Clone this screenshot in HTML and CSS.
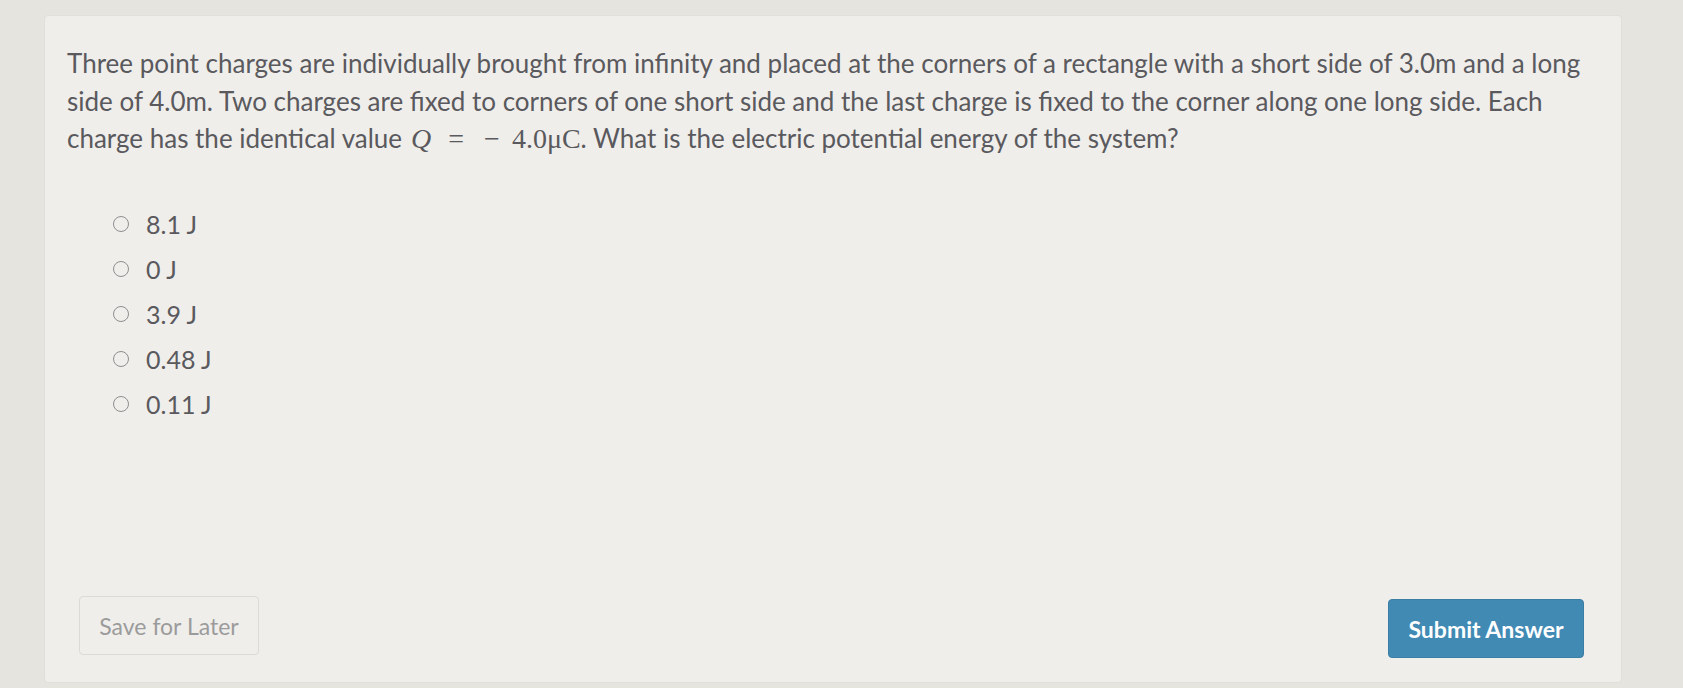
FILE: index.html
```html
<!DOCTYPE html>
<html lang="en">
<head>
<meta charset="utf-8">
<title>Question</title>
<link rel="stylesheet" href="styles.css">
</head>
<body>
<main class="card">
  <p class="question">Three point charges are individually brought from infinity and placed at the corners of a rectangle with a short side of 3.0m and a long side of 4.0m. Two charges are fixed to corners of one short side and the last charge is fixed to the corner along one long side. Each charge has the identical value<i class="m var">Q</i><span class="m op op-eq">=</span><span class="m op op-minus">−</span><span class="m num">4.0μC</span>. What is the electric potential energy of the system?</p>
  <ul class="options">
    <li class="option"><span class="radio"></span><span class="label">8.1 J</span></li>
    <li class="option"><span class="radio"></span><span class="label">0 J</span></li>
    <li class="option"><span class="radio"></span><span class="label">3.9 J</span></li>
    <li class="option"><span class="radio"></span><span class="label">0.48 J</span></li>
    <li class="option"><span class="radio"></span><span class="label">0.11 J</span></li>
  </ul>
  <div class="actions">
    <button class="btn btn-save">Save for Later</button>
    <button class="btn btn-submit">Submit Answer</button>
  </div>
</main>
</body>
</html>
```
FILE: styles.css
```css
html, body {
  margin: 0;
  padding: 0;
}
body {
  background: #e6e4df;
  width: 1683px;
  height: 688px;
  overflow: hidden;
  font-family: Lato, "Open Sans", sans-serif;
}
.card {
  margin: 15px 0 0 44px;
  width: 1578px;
  height: 668px;
  box-sizing: border-box;
  background: #efeeeb;
  border: 1px solid #e1dfda;
  border-radius: 4px;
  padding: 29px 20px 24px 22px;
  display: flex;
  flex-direction: column;
}
.question {
  margin: 0;
  font-size: 26px;
  line-height: 37.5px;
  color: #5a595d;
  width: 1545px;
}
.m {
  font-family: "Liberation Serif", "DejaVu Serif", serif;
  font-size: 28px;
  line-height: 1;
  display: inline-block;
}
.var {
  font-style: italic;
  margin-left: 9px;
  margin-right: 17px;
}
.op-eq {
  margin-right: 20px;
}
.op-minus {
  margin-right: 12px;
}
.options {
  list-style: none;
  margin: 44px 0 0 0;
  padding: 0 0 0 46px;
}
.option {
  display: flex;
  align-items: center;
  height: 45px;
}
.radio {
  width: 14px;
  height: 14px;
  border: 1.5px solid #8e8e90;
  border-radius: 50%;
  margin-right: 17px;
}
.label {
  font-size: 25px;
  color: #5a595d;
}
.actions {
  margin-top: auto;
  display: flex;
  justify-content: space-between;
  align-items: flex-end;
  padding: 0 17px 0 12px;
}
.btn {
  font-family: Lato, "Open Sans", sans-serif;
  font-size: 23px;
  border-radius: 4px;
  cursor: pointer;
}
.btn-save {
  width: 180px;
  height: 59px;
  margin-bottom: 3px;
  background: #efeeeb;
  color: #9b9b9b;
  border: 1px solid #dcdad5;
}
.btn-submit {
  width: 196px;
  height: 59px;
  background: #418ab4;
  color: #ffffff;
  font-weight: 700;
  border: 1px solid #3a7ea5;
}
```
